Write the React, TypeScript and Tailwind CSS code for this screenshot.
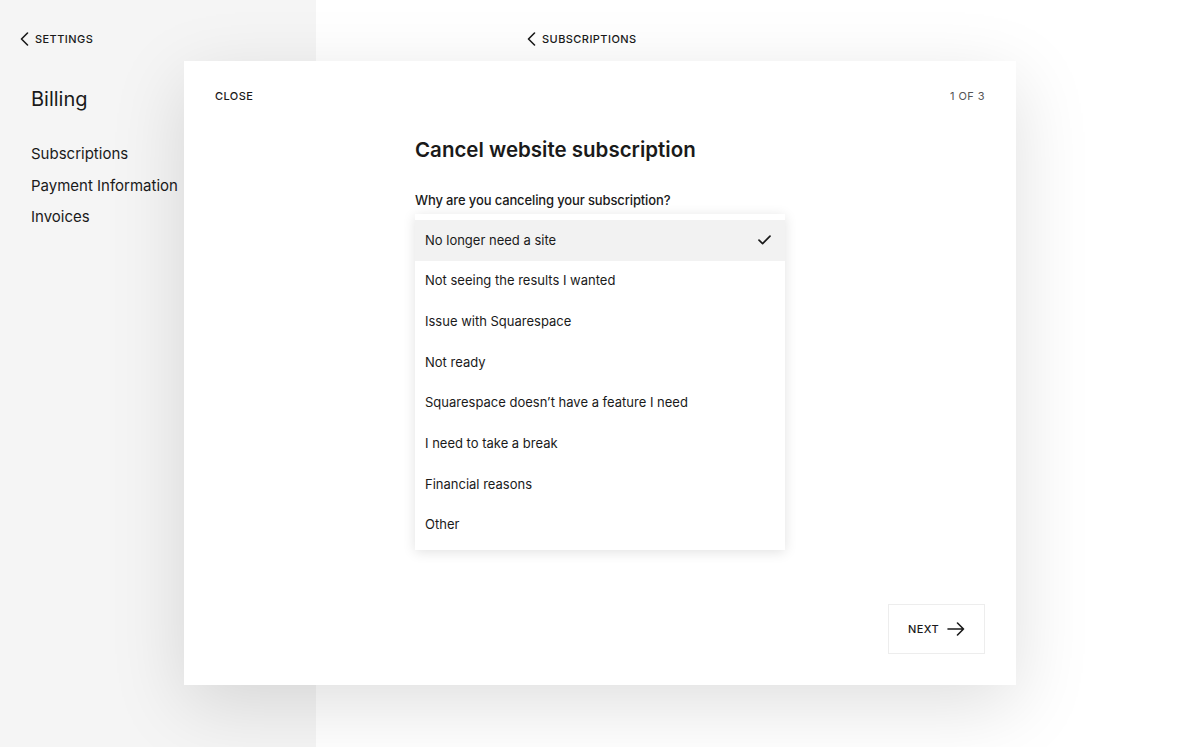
const REASONS = [
  'No longer need a site',
  'Not seeing the results I wanted',
  'Issue with Squarespace',
  'Not ready',
  'Squarespace doesn\u2019t have a feature I need',
  'I need to take a break',
  'Financial reasons',
  'Other',
];

function ChevronLeft({ className = '' }: { className?: string }) {
  return (
    <svg width="9" height="14" viewBox="0 0 9 14" fill="none" className={className}>
      <path d="M7.5 1 L1.5 7 L7.5 13" stroke="#1a1a1a" strokeWidth="1.6" strokeLinecap="round" strokeLinejoin="round" />
    </svg>
  );
}

export default function App() {
  const selected = 0;

  return (
    <div className="relative flex w-[1200px] h-[747px] overflow-hidden bg-white text-[#1a1a1a] font-['Inter',sans-serif]">
      {/* Sidebar */}
      <aside className="w-[316px] shrink-0 bg-[#f5f5f5]">
        <div className="flex items-center gap-[6px] pl-[20px] pt-[32px]">
          <ChevronLeft />
          <span className="text-[11px] font-medium tracking-[0.04em] leading-[14px]">SETTINGS</span>
        </div>
        <h1 className="mt-[39px] pl-[31px] text-[20px] leading-[28px]">Billing</h1>
        <nav className="mt-[30px] pl-[31px] flex flex-col gap-[9.5px] text-[15px] leading-[22px]">
          <a>Subscriptions</a>
          <a>Payment Information</a>
          <a>Invoices</a>
        </nav>
      </aside>

      {/* Main */}
      <main className="flex-1">
        <div className="flex items-center gap-[6px] pl-[211px] pt-[32px]">
          <ChevronLeft />
          <span className="text-[11px] font-medium tracking-[0.04em] leading-[14px]">SUBSCRIPTIONS</span>
        </div>
      </main>

      {/* Modal */}
      <div className="absolute left-[184px] top-[61px] w-[832px] h-[624px] bg-white flex flex-col shadow-[0_20px_70px_rgba(0,0,0,0.13)]">
        <div className="flex justify-between px-[31px] pt-[28px] text-[11px] leading-[14px] tracking-[0.04em]">
          <button className="font-medium">CLOSE</button>
          <span className="text-[#555]">1 OF 3</span>
        </div>

        <div className="ml-[231px] w-[370px]">
          <h2 className="mt-[33px] text-[20.5px] leading-[28px] font-semibold">
            Cancel website subscription
          </h2>
          <p className="mt-[27px] text-[13px] leading-[18px] font-medium tracking-[-0.01em]">
            Why are you canceling your subscription?
          </p>

          <ul className="mt-[5px] bg-white pt-[6px] pb-[4px] shadow-[0_2px_12px_rgba(0,0,0,0.12)]">
            {REASONS.map((r, i) => (
              <li
                key={r}
                className={`flex items-center justify-between h-[40.7px] pl-[10px] pr-[14px] text-[13px] ${
                  i === selected ? 'bg-[#f2f2f2]' : ''
                }`}
              >
                <span>{r}</span>
                {i === selected && (
                  <svg width="13" height="10" viewBox="0 0 13 10" fill="none">
                    <path d="M1 5.2 L4.6 8.6 L12 1.2" stroke="#1a1a1a" strokeWidth="1.7" strokeLinecap="round" strokeLinejoin="round" />
                  </svg>
                )}
              </li>
            ))}
          </ul>
        </div>

        <div className="mt-auto flex justify-end pr-[31px] pb-[31px]">
          <button className="flex items-center gap-[8px] w-[97px] h-[50px] justify-center border border-[#ededed]">
            <span className="text-[11px] font-medium tracking-[0.04em] leading-[14px]">NEXT</span>
            <svg width="18" height="14" viewBox="0 0 18 14" fill="none">
              <path d="M1 7 H16.5 M10.5 1 L16.5 7 L10.5 13" stroke="#1a1a1a" strokeWidth="1.6" strokeLinecap="round" strokeLinejoin="round" />
            </svg>
          </button>
        </div>
      </div>
    </div>
  );
}
